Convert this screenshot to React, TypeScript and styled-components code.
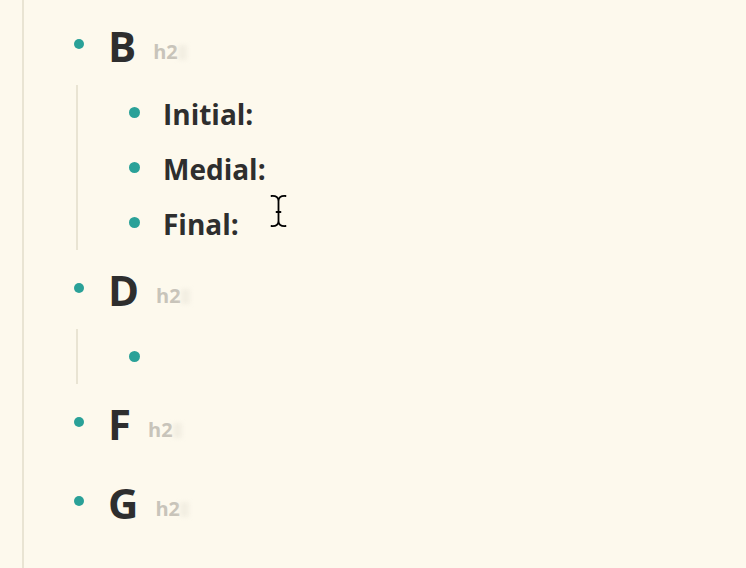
import React from "react";
import styled, { createGlobalStyle } from "styled-components";

const palette = {
  bg: "#fdf9ed",
  guide: "#e9e4d3",
  text: "#2e2e2e",
  bullet: "#2aa198",
  tag: "#c8c4ba",
};

const GlobalStyle = createGlobalStyle`
  html, body {
    margin: 0;
    padding: 0;
    background: ${palette.bg};
  }
  body {
    font-family: "Open Sans", "Noto Sans", "DejaVu Sans", sans-serif;
    color: ${palette.text};
  }
`;

const Page = styled.div`
  position: relative;
  min-height: 568px;
  padding-left: 22px;
  overflow: hidden;
`;

const Outline = styled.ul`
  list-style: none;
  margin: 0;
  padding: 6px 0 0 0;
  min-height: 562px;
  border-left: 2px solid ${palette.guide};
`;

const Node = styled.li`
  margin: 0;
  padding: 0;
`;

const Row = styled.div<{ $level: number }>`
  display: flex;
  align-items: center;
  height: ${(p) => (p.$level === 0 ? 79 : 55)}px;
  padding-left: ${(p) => (p.$level === 0 ? 42 : 43)}px;
`;

const BulletSlot = styled.span<{ $level: number }>`
  display: flex;
  align-items: center;
  justify-content: center;
  width: 26px;
  height: 100%;
  margin-right: 16px;
  flex-shrink: 0;
`;

const Dot = styled.span<{ $level: number }>`
  display: block;
  width: ${(p) => (p.$level === 0 ? 10 : 11)}px;
  height: ${(p) => (p.$level === 0 ? 10 : 11)}px;
  border-radius: 50%;
  background: ${palette.bullet};
  margin-bottom: ${(p) => (p.$level === 0 ? 3 : 0)}px;
`;

const Heading = styled.span`
  font-size: 42px;
  font-weight: 700;
  line-height: 79px;
  white-space: nowrap;
`;

const Tag = styled.span`
  position: relative;
  display: inline-block;
  margin-left: 17px;
  font-size: 20px;
  font-weight: 700;
  line-height: 1;
  color: ${palette.tag};
  vertical-align: 3px;

  &::after {
    content: "";
    position: absolute;
    left: 100%;
    top: 3px;
    width: 9px;
    height: 15px;
    background: #eeeade;
    filter: blur(2px);
    opacity: 0.7;
  }
`;

const Label = styled.span`
  font-size: 28px;
  font-weight: 700;
  line-height: 51px;
  padding-top: 4px;
  white-space: nowrap;
`;

const Children = styled.ul`
  list-style: none;
  margin: 0 0 0 52px;
  padding: 0;
  border-left: 2px solid ${palette.guide};
`;

const Cursor = styled.svg`
  position: absolute;
  left: 270px;
  top: 194px;
`;

interface OutlineItem {
  title: string;
  children?: string[];
}

const items: OutlineItem[] = [
  { title: "B", children: ["Initial:", "Medial:", "Final:"] },
  { title: "D", children: [""] },
  { title: "F" },
  { title: "G" },
];

const App: React.FC = () => {
  return (
    <>
      <GlobalStyle />
      <Page>
        <Outline>
          {items.map((item) => (
            <Node key={item.title}>
              <Row $level={0}>
                <BulletSlot $level={0}>
                  <Dot $level={0} />
                </BulletSlot>
                <Heading>
                  {item.title}
                  <Tag>h2</Tag>
                </Heading>
              </Row>
              {item.children && (
                <Children>
                  {item.children.map((child, index) => (
                    <Node key={index}>
                      <Row $level={1}>
                        <BulletSlot $level={1}>
                          <Dot $level={1} />
                        </BulletSlot>
                        <Label>{child}</Label>
                      </Row>
                    </Node>
                  ))}
                </Children>
              )}
            </Node>
          ))}
        </Outline>
        <Cursor width="17" height="34" viewBox="0 0 17 34">
          <path
            d="M1.5 2 Q8.5 1.5 8.5 7 Q8.5 1.5 15.5 2 M8.5 7 V27 M1.5 32 Q8.5 32.5 8.5 27 Q8.5 32.5 15.5 32 M6.5 18 H10.5"
            fill="none"
            stroke="#000"
            strokeWidth="1.8"
            strokeLinecap="round"
          />
        </Cursor>
      </Page>
    </>
  );
};

export default App;
